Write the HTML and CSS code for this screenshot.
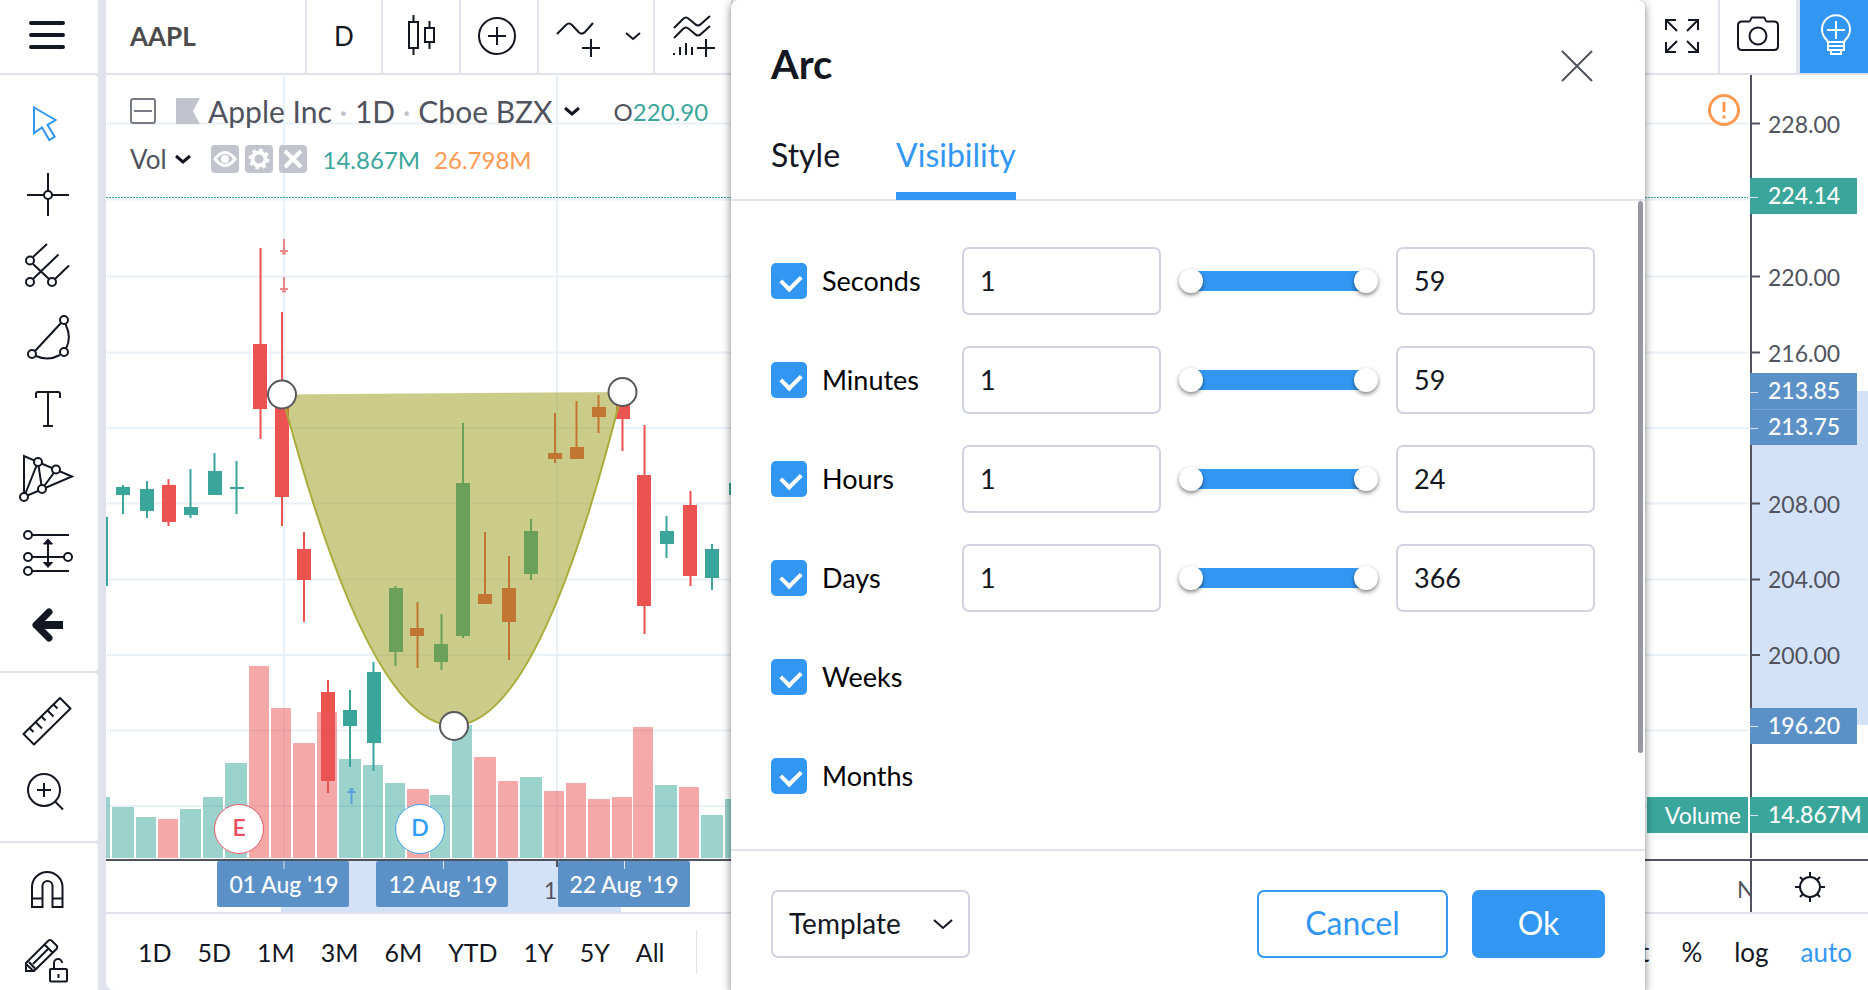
FILE: index.html
```html
<!DOCTYPE html>
<html lang="en">
<head>
    <meta charset="UTF-8">
    <meta name="viewport" content="width=device-width, initial-scale=1.0">
    <title>AAPL chart</title>
    <link rel="stylesheet" href="styles.css">
</head>
<body>

    <div class="layout">

        <nav class="sidebar">
            <div class="menu">
                <button class="tool" aria-label="Menu">
                    <svg class="icon" viewBox="0 0 56 56"><path d="M10 15h32M10 27h32M10 39h32" stroke-width="4" stroke-linecap="round"/></svg>
                </button>
            </div>
            <div class="tools">
                <button class="tool active" aria-label="Cursor">
                    <svg class="icon" viewBox="0 0 56 56"><path d="M13 12.5L34.5 25L26.5 29.8L33.7 41.7L28.3 45L21 32.5L13 38Z"/></svg>
                </button>
                <button class="tool" aria-label="Cross">
                    <svg class="icon" viewBox="0 0 56 56"><path d="M6 28h17M31 28h17M27 6v18M27 32v17"/><circle cx="27" cy="28" r="4"/></svg>
                </button>
                <button class="tool" aria-label="Pitchfork">
                    <svg class="icon" viewBox="0 0 56 56"><path d="M12 18L26 5M12 40L37.500 15.500M12 25L28 40M34 40L48 26.500"/><circle cx="9" cy="21.500" r="4"/><circle cx="9" cy="43" r="4"/><circle cx="31" cy="43" r="4"/></svg>
                </button>
                <button class="tool" aria-label="Shapes">
                    <svg class="icon" viewBox="0 0 56 56"><path d="M14 40L40 12M44.500 13Q51 27 45 37.500M15 45Q27 50.500 39 44"/><circle cx="43" cy="9" r="4"/><circle cx="11" cy="43" r="4"/><circle cx="43" cy="41" r="4"/></svg>
                </button>
                <button class="tool" aria-label="Text">
                    <svg class="icon" viewBox="0 0 56 56"><path d="M15 15V11Q15 9 17 9H37Q39 9 39 11V15M27 9V43M22 43H32"/></svg>
                </button>
                <button class="tool" aria-label="Patterns">
                    <svg class="icon" viewBox="0 0 56 56"><path d="M3 42V1L51 21.500ZM3 42L17 7L21 34L35 15"/><g class="dot"><circle cx="3" cy="42" r="4"/><circle cx="17" cy="7" r="4"/><circle cx="35" cy="14.500" r="4"/><circle cx="21" cy="34" r="4"/></g></svg>
                </button>
                <button class="tool" aria-label="Position">
                    <svg class="icon" viewBox="0 0 56 56"><path d="M11 8H48M11 30H43M11 44H48M27 14V38"/><path class="solid" d="M22.500 17L27 12L31.500 17ZM22.500 35.500L27 40.500L31.500 35.500Z" stroke-width="1"/><circle cx="7" cy="8" r="4"/><circle cx="7" cy="30" r="4"/><circle cx="47" cy="30" r="4"/><circle cx="7" cy="44" r="4"/></svg>
                </button>
                <button class="tool" aria-label="Arrow">
                    <svg class="icon" viewBox="0 0 56 56"><path d="M28 13L15 26L28 39M15 26H30" stroke-width="7" stroke-linecap="round" stroke-linejoin="round"/><path d="M24 26H42" stroke-width="8"/></svg>
                </button>
            </div>
            <div class="tools measure">
                <button class="tool" aria-label="Measure">
                    <svg class="icon" viewBox="0 0 56 56"><path d="M39 5L49.500 15.500L13 51.500L2.500 41Z" stroke-linejoin="round"/><path d="M8.500 35l4 4M14.500 29l6.500 6.500M20.500 23.500l4 4M26.500 17.500l6 6M32.500 11.500l4 4"/></svg>
                </button>
                <button class="tool" aria-label="Zoom in">
                    <svg class="icon" viewBox="0 0 56 56"><circle cx="23" cy="25" r="16"/><path d="M16 25h14M23 18v14M34.500 37l7.500 7.500"/></svg>
                </button>
            </div>
            <div class="tools modes">
                <button class="tool" aria-label="Magnet">
                    <svg class="icon" viewBox="0 0 56 56"><path d="M11 46V25A15.300 15.300 0 0 1 41.500 25V46H31.500V25A5 5 0 0 0 21.500 25V46ZM11 37.500H21.500M31.500 37.500H41.500"/></svg>
                </button>
                <button class="tool" aria-label="Lock drawing">
                    <svg class="icon" viewBox="0 0 56 56"><path d="M5 38V30L27 8Q29 6 31 8L35.500 12.500Q37 14 35.500 16L13 38ZM23.500 11.500L32 20M8 29L14 35.500M12 31L27 16M5 31L12.500 38"/><rect x="29" y="36" width="17" height="12.500" rx="1"/><path d="M33 36V30A4 4 0 0 1 41 30M37.500 41V45"/></svg>
                </button>
            </div>
        </nav>

        <main class="main">

            <header class="topbar">
                <button class="cell symbol">AAPL</button>
                <button class="cell interval">D</button>
                <button class="cell" aria-label="Candles">
                    <svg class="icon" viewBox="0 0 56 56"><path d="M16 14h9v26h-9zM20.500 7v7M20.500 40v7M32 20h9v14h-9zM36.500 13v7M36.500 34v7"/></svg>
                </button>
                <button class="cell" aria-label="Compare">
                    <svg class="icon" viewBox="0 0 56 56"><circle cx="26" cy="28" r="18"/><path d="M17 28h18M26 19v18"/></svg>
                </button>
                <div class="cell indicators">
                    <button class="plain" aria-label="Indicators">
                        <svg class="icon" viewBox="0 0 56 56"><path d="M8 26L17 17Q20 14 23 17L30 24.500Q33 27 36 24L44 15M42 31v18M33 40h18"/></svg>
                    </button>
                    <button class="plain" aria-label="Favorite indicators">
                        <svg class="chevron" viewBox="0 0 20 20"><path d="M3 7l7 6l7-6"/></svg>
                    </button>
                </div>
                <button class="cell" aria-label="Indicator templates">
                    <svg class="icon" viewBox="0 0 56 56"><path d="M9 20L18 11Q21 8 24 11L30 16Q33 19 36 16L45 8M9 30L18 21Q21 18 24 21L30 26Q33 29 36 26L45 18M9 45v2M15 39v8M21 35v12M27 39v8M41 31v18M32 40h18"/></svg>
                </button>
                <span class="spacer"></span>
                <button class="cell" aria-label="Full screen">
                    <svg class="icon" viewBox="0 0 56 56"><path d="M14 22V12H24M14 12L25 23M36 12H46V22M46 12L35 23M14 34V44H24M14 44L25 33M46 34V44H36M46 44L35 33"/></svg>
                </button>
                <button class="cell" aria-label="Snapshot">
                    <svg class="icon" viewBox="0 0 56 56"><path d="M12 13.500H19Q20 13.500 21 11L22 9.500H34L35 11Q36 13.500 37 13.500H44Q48 13.500 48 17.500V38Q48 42 44 42H12Q8 42 8 38V17.500Q8 13.500 12 13.500Z"/><circle cx="28" cy="28" r="8.500"/></svg>
                </button>
                <button class="cell publish" aria-label="Publish idea">
                    <svg class="icon" viewBox="0 0 56 56"><path d="M21 32A14 14 0 1 1 39 32Q38.500 33 38 35V42H22V35Q21.500 33 21 32ZM22 34H38M22 38H38M25 42V46H35V42M21 22h18M30 13v18"/></svg>
                </button>
            </header>

            <section class="chart">
                <div class="plot-row">
                    <div class="plot">
                        <svg class="canvas">
                            <!-- all coordinates below are window coordinates -->
                            <g transform="translate(-106 -75)">
                                <g class="grid">
                                    <path d="M107 123.500H2400M107 199.500H2400M107 276.500H2400M107 352.500H2400M107 428H2400M107 503.500H2400M107 579.500H2400M107 655H2400M107 730.500H2400M107 806H2400"/>
                                    <path d="M284 76V858M557 76V858"/>
                                </g>
                                <path class="last-price" d="M106 197.500H2400"/>

                                <g class="volume up">
                                    <rect x="106" y="797" width="4" height="61"/>
                                    <rect x="112" y="807" width="22" height="51"/>
                                    <rect x="136" y="817" width="20" height="41"/>
                                    <rect x="180" y="809" width="21" height="49"/>
                                    <rect x="203" y="797" width="20" height="61"/>
                                    <rect x="225" y="763" width="22" height="95"/>
                                    <rect x="339" y="759" width="22" height="99"/>
                                    <rect x="363" y="765" width="20" height="93"/>
                                    <rect x="385" y="783" width="20" height="75"/>
                                    <rect x="430" y="795" width="20" height="63"/>
                                    <rect x="452" y="725" width="20" height="133"/>
                                    <rect x="520" y="777" width="22" height="81"/>
                                    <rect x="655" y="785" width="22" height="73"/>
                                    <rect x="701" y="815" width="22" height="43"/>
                                    <rect x="725" y="799" width="20" height="59"/>
                                </g>
                                <g class="volume down">
                                    <rect x="158" y="819" width="20" height="39"/>
                                    <rect x="249" y="666" width="20" height="192"/>
                                    <rect x="271" y="708" width="20" height="150"/>
                                    <rect x="293" y="743" width="22" height="115"/>
                                    <rect x="317" y="712" width="20" height="146"/>
                                    <rect x="407" y="789" width="22" height="69"/>
                                    <rect x="474" y="757" width="22" height="101"/>
                                    <rect x="498" y="781" width="20" height="77"/>
                                    <rect x="544" y="791" width="20" height="67"/>
                                    <rect x="566" y="783" width="20" height="75"/>
                                    <rect x="588" y="799" width="22" height="59"/>
                                    <rect x="612" y="797" width="20" height="61"/>
                                    <rect x="633" y="727" width="20" height="131"/>
                                    <rect x="679" y="787" width="20" height="71"/>
                                </g>

                                <g class="wick up">
                                    <path d="M123 485V514M147 481V518M190.500 469V518M214.500 453V495M236.500 461V514M350 690V767M373.500 662V771M395.500 586V666M441.500 614V670M463 423V638M531 519V580M666.500 516V558M712 544V590"/>
                                </g>
                                <g class="wick down">
                                    <path d="M168.500 479V526M260.500 248V439M282 312V526M304 532V622M328 680V793M417.500 602V668M485 532V604M509 556V660M555 413V463M576.500 401V459M598.500 395V433M622.500 395V451M644.500 425V634M690.500 491V586"/>
                                </g>
                                <g class="candle up">
                                    <rect x="106" y="517" width="2" height="69"/>
                                    <rect x="116" y="487" width="14" height="8"/>
                                    <rect x="140" y="489" width="14" height="22"/>
                                    <rect x="184" y="507" width="14" height="8"/>
                                    <rect x="208" y="471" width="14" height="24"/>
                                    <rect x="230" y="487" width="14" height="2"/>
                                    <rect x="343" y="710" width="14" height="16"/>
                                    <rect x="367" y="672" width="14" height="71"/>
                                    <rect x="389" y="588" width="14" height="64"/>
                                    <rect x="434" y="644" width="14" height="18"/>
                                    <rect x="456" y="483" width="14" height="153"/>
                                    <rect x="524" y="531" width="14" height="43"/>
                                    <rect x="660" y="531" width="14" height="13"/>
                                    <rect x="705" y="549" width="14" height="29"/>
                                    <rect x="729" y="483" width="14" height="12"/>
                                </g>
                                <g class="candle down">
                                    <rect x="162" y="485" width="14" height="37"/>
                                    <rect x="253" y="344" width="14" height="65"/>
                                    <rect x="275" y="396" width="14" height="101"/>
                                    <rect x="297" y="549" width="14" height="31"/>
                                    <rect x="321" y="692" width="14" height="89"/>
                                    <rect x="410" y="628" width="14" height="8"/>
                                    <rect x="478" y="594" width="14" height="10"/>
                                    <rect x="502" y="588" width="14" height="34"/>
                                    <rect x="548" y="453" width="14" height="6"/>
                                    <rect x="570" y="447" width="14" height="12"/>
                                    <rect x="592" y="407" width="14" height="10"/>
                                    <rect x="616" y="398" width="14" height="21"/>
                                    <rect x="637" y="475" width="14" height="131"/>
                                    <rect x="683" y="505" width="14" height="71"/>
                                </g>

                                <g class="mark down">
                                    <path d="M284 239V254M280 251H288M282 253.500H286M284 277V292M280 289H288M282 291.500H286"/>
                                </g>
                                <g class="mark up">
                                    <path d="M351.500 804V788M347.500 792H355.500M349.500 789.500H353.500"/>
                                </g>

                                <!-- arc drawing -->
                                <path class="arc-fill" d="M282 394.500Q456 1058 622 392Z"/>
                                <path class="arc-line" d="M282 394.500Q456 1058 622 392"/>
                                <g class="handle">
                                    <circle cx="282" cy="394.500" r="14"/>
                                    <circle cx="622.500" cy="392" r="14"/>
                                    <circle cx="454" cy="726" r="14"/>
                                </g>

                                <g class="event earnings">
                                    <circle cx="239" cy="829" r="24.500"/>
                                    <text x="239" y="836">E</text>
                                </g>
                                <g class="event dividends">
                                    <circle cx="420" cy="829" r="24.500"/>
                                    <text x="420" y="836">D</text>
                                </g>
                            </g>
                        </svg>

                        <div class="legend">
                            <div class="legend-row title-row">
                                <svg class="collapse" viewBox="0 0 26 26"><rect x="1" y="1" width="24" height="24" rx="2"/><path d="M4 13h18"/></svg>
                                <svg class="flag" viewBox="0 0 24 26"><path d="M0 0H24L17 13L24 26H0Z"/></svg>
                                <span class="name">Apple Inc <i>·</i> 1D <i>·</i> Cboe BZX</span>
                                <svg class="chevron bold" viewBox="0 0 20 20"><path d="M3 7l7 6l7-6"/></svg>
                                <span class="ohlc">O<b>220.90</b></span>
                            </div>
                            <div class="legend-row">
                                <span class="study">Vol</span>
                                <svg class="chevron bold" viewBox="0 0 20 20"><path d="M3 7l7 6l7-6"/></svg>
                                <div class="study-actions">
                                    <button aria-label="Hide"><svg viewBox="0 0 28 28"><path d="M4 14Q14 1 24 14Q14 27 4 14Z"/><circle cx="14" cy="14" r="2" stroke-width="4"/></svg></button>
                                    <button aria-label="Settings"><svg viewBox="0 0 28 28"><circle cx="14" cy="14" r="6.500" stroke-width="4"/><circle cx="14" cy="14" r="9" stroke-width="3" stroke-dasharray="3.500 3.570"/></svg></button>
                                    <button aria-label="Remove"><svg viewBox="0 0 28 28"><path d="M6 6L22 22M22 6L6 22" stroke-width="4"/></svg></button>
                                </div>
                                <span class="value-up">14.867M</span>
                                <span class="value-ma">26.798M</span>
                            </div>
                        </div>

                        <svg class="warning" viewBox="0 0 32 32"><circle cx="16" cy="16" r="14.500"/><path d="M16 8V18M16 21.500V24.500"/></svg>
                        <span class="volume-tag">Volume</span>
                    </div>

                    <svg class="price-axis">
                        <g transform="translate(-1750 -75)">
                            <rect class="range-fill" x="1752" y="391" width="116" height="334"/>
                            <path class="axis-line" d="M1751 75V858M1752 123.500H1760M1752 276.500H1760M1752 352.500H1760M1752 503.500H1760M1752 579.500H1760M1752 655H1760"/>
                            <text x="1768" y="133">228.00</text>
                            <text x="1768" y="286">220.00</text>
                            <text x="1768" y="362">216.00</text>
                            <text x="1768" y="513">208.00</text>
                            <text x="1768" y="588">204.00</text>
                            <text x="1768" y="664">200.00</text>
                            <rect class="tag-teal" x="1750" y="178" width="107" height="36"/>
                            <rect class="tag-blue" x="1750" y="373" width="107" height="36"/>
                            <rect class="tag-blue" x="1750" y="409" width="107" height="36"/>
                            <rect class="tag-blue" x="1750" y="708" width="107" height="36"/>
                            <rect class="tag-teal" x="1750" y="797" width="118" height="36"/>
                            <path class="tag-split" d="M1752 409.500H1857"/>
                            <path class="tag-tick" d="M1750 197.500H1758M1750 392.500H1758M1750 428.500H1758M1750 726.500H1758M1750 815.500H1758"/>
                            <g class="tag-text">
                                <text x="1768" y="204">224.14</text>
                                <text x="1768" y="399">213.85</text>
                                <text x="1768" y="435">213.75</text>
                                <text x="1768" y="734">196.20</text>
                                <text x="1768" y="823">14.867M</text>
                            </g>
                        </g>
                    </svg>
                </div>

                <div class="time-row">
                    <svg class="time-axis">
                        <g transform="translate(-106 -861)">
                            <rect class="range-fill" x="281" y="861" width="340" height="51"/>
                            <path class="axis-line" d="M557 861V867"/>
                            <text x="557" y="899">19</text>
                            <rect class="tag-blue" x="217" y="861" width="132" height="46" rx="2"/>
                            <rect class="tag-blue" x="376" y="861" width="132" height="46" rx="2"/>
                            <rect class="tag-blue" x="558" y="861" width="132" height="46" rx="2"/>
                            <path class="tag-tick" d="M284 861V869M443.500 861V869M624.500 861V869"/>
                            <g class="tag-text">
                                <text x="284" y="893">01 Aug '19</text>
                                <text x="443" y="893">12 Aug '19</text>
                                <text x="624" y="893">22 Aug '19</text>
                            </g>
                        </g>
                    </svg>
                    <span class="next-month">N</span>
                    <button class="axis-settings" aria-label="Chart settings">
                        <svg viewBox="0 0 32 32"><circle cx="16" cy="16" r="10"/><path d="M16 6V1M16 26V31M6 16H1M26 16H31M9 9L6 6M23 9L26 6M9 23L6 26M23 23L26 26"/></svg>
                    </button>
                </div>
            </section>

            <footer class="bottombar">
                <div class="ranges">
                    <button>1D</button>
                    <button>5D</button>
                    <button>1M</button>
                    <button>3M</button>
                    <button>6M</button>
                    <button>YTD</button>
                    <button>1Y</button>
                    <button>5Y</button>
                    <button>All</button>
                </div>
                <div class="scales">
                    <button>ext</button>
                    <button>%</button>
                    <button>log</button>
                    <button class="on">auto</button>
                </div>
            </footer>
        </main>
    </div>

    <div class="dialog" role="dialog" aria-labelledby="dialogTitle">
        <div class="dialog-head">
            <h1 id="dialogTitle">Arc</h1>
            <button class="close" aria-label="Close">
                <svg viewBox="0 0 32 32"><path d="M1 1L31 31M31 1L1 31"/></svg>
            </button>
        </div>
        <div class="tabs">
            <button class="tab">Style</button>
            <button class="tab selected">Visibility</button>
        </div>

        <div class="dialog-body">
            <div class="row">
                <label class="check"><input type="checkbox" checked><span>Seconds</span></label>
                <input class="field" type="text" value="1" aria-label="Seconds from">
                <div class="range">
                    <input type="range" min="1" max="59" value="1" aria-label="Seconds minimum">
                    <input type="range" min="1" max="59" value="59" aria-label="Seconds maximum">
                </div>
                <input class="field" type="text" value="59" aria-label="Seconds to">
            </div>
            <div class="row">
                <label class="check"><input type="checkbox" checked><span>Minutes</span></label>
                <input class="field" type="text" value="1" aria-label="Minutes from">
                <div class="range">
                    <input type="range" min="1" max="59" value="1" aria-label="Minutes minimum">
                    <input type="range" min="1" max="59" value="59" aria-label="Minutes maximum">
                </div>
                <input class="field" type="text" value="59" aria-label="Minutes to">
            </div>
            <div class="row">
                <label class="check"><input type="checkbox" checked><span>Hours</span></label>
                <input class="field" type="text" value="1" aria-label="Hours from">
                <div class="range">
                    <input type="range" min="1" max="24" value="1" aria-label="Hours minimum">
                    <input type="range" min="1" max="24" value="24" aria-label="Hours maximum">
                </div>
                <input class="field" type="text" value="24" aria-label="Hours to">
            </div>
            <div class="row">
                <label class="check"><input type="checkbox" checked><span>Days</span></label>
                <input class="field" type="text" value="1" aria-label="Days from">
                <div class="range">
                    <input type="range" min="1" max="366" value="1" aria-label="Days minimum">
                    <input type="range" min="1" max="366" value="366" aria-label="Days maximum">
                </div>
                <input class="field" type="text" value="366" aria-label="Days to">
            </div>
            <div class="row">
                <label class="check"><input type="checkbox" checked><span>Weeks</span></label>
            </div>
            <div class="row">
                <label class="check"><input type="checkbox" checked><span>Months</span></label>
            </div>
            <div class="scrollbar"></div>
        </div>

        <div class="dialog-foot">
            <div class="template">
                <select aria-label="Template">
                    <option>Template</option>
                </select>
                <svg class="chevron" viewBox="0 0 20 20"><path d="M1 6l9 8l9-8"/></svg>
            </div>
            <button class="btn cancel">Cancel</button>
            <button class="btn ok">Ok</button>
        </div>
    </div>

</body>
</html>
```

FILE: styles.css
```css
* {
    box-sizing: border-box;
}

body {
    margin: 0;
    height: 100vh;
    overflow: hidden;
    background: #e0e3eb;
    color: #131722;
    font-family: Lato, "Noto Sans", sans-serif;
    font-size: 26px;
}

button, input, select {
    font: inherit;
    color: inherit;
}

button {
    margin: 0;
    padding: 0;
    border: none;
    background: none;
    cursor: pointer;
}

svg {
    display: block;
    flex: none;
    fill: none;
    stroke: #131722;
    stroke-width: 2;
}

svg text {
    stroke: none;
}

.layout {
    display: flex;
    gap: 8px;
    height: 100vh;
}

.icon {
    width: 56px;
    height: 56px;
    overflow: visible;
}

.chevron {
    width: 20px;
    height: 20px;
}

.chevron.bold {
    stroke-width: 3;
}

/* left toolbar */
.sidebar {
    display: flex;
    flex-direction: column;
    gap: 2px;
    width: 98px;
    flex: none;
    overflow: hidden;
}

.menu {
    height: 73px;
    flex: none;
    background: #fff;
}

.tools {
    flex: none;
    padding: 12px 0 8px;
    background: #fff;
    border-radius: 0 4px 4px 0;
}

.measure {
    padding: 12px 0;
}

.modes {
    padding: 10px 0;
}

.tool {
    display: flex;
    align-items: center;
    justify-content: center;
    width: 100%;
    height: 72px;
}

.tool.active svg {
    stroke: #3297f3;
}

.dot {
    fill: #fff;
}

.solid {
    fill: #131722;
}

/* main column */
.main {
    display: flex;
    flex-direction: column;
    flex: 1;
    min-width: 0;
    background: #fff;
    border-radius: 0 0 0 8px;
}

.topbar {
    display: flex;
    height: 75px;
    flex: none;
    border-bottom: 2px solid #e0e3eb;
}

.cell {
    display: flex;
    align-items: center;
    justify-content: center;
    width: 78px;
    padding-bottom: 2px;
    border-right: 2px solid #e0e3eb;
}

.symbol {
    width: 201px;
    padding-left: 24px;
    justify-content: flex-start;
    font-weight: bold;
    color: #4a4a4a;
}

.interval {
    width: 76px;
}

.indicators {
    width: 116px;
    gap: 18px;
}

.spacer {
    flex: 1;
}

.publish {
    width: 70px;
    border-right: none;
    border-left: 2px solid #e0e3eb;
    background: #3297f3;
}

.publish svg {
    stroke: #fff;
}

/* chart */
.chart {
    display: flex;
    flex-direction: column;
    flex: 1;
    min-height: 0;
}

.plot-row {
    display: flex;
    flex: 1;
    min-height: 0;
    border-bottom: 2px solid #50535e;
}

.plot {
    position: relative;
    flex: 1;
    min-width: 0;
    margin-right: 2px;
    overflow: hidden;
}

.canvas {
    width: 100%;
    height: 100%;
}

.grid {
    stroke: #e9f0f6;
}

.last-price {
    stroke: #3aa69b;
    stroke-width: 1;
    stroke-dasharray: 2 1;
}

.volume {
    stroke: none;
    opacity: 0.5;
}

.volume.up, .candle.up {
    fill: #3aa69b;
}

.volume.down {
    fill: #eb5454;
}

.candle {
    stroke: none;
}

.candle.down {
    fill: #eb5350;
}

.wick.up {
    stroke: #3aa69b;
}

.wick.down {
    stroke: #eb5350;
}

.mark {
    opacity: 0.7;
}

.mark.up {
    stroke: #3f8ae0;
}

.mark.down {
    stroke: #e65a5a;
}

.arc-fill {
    fill: #999915;
    stroke: none;
    opacity: 0.5;
}

.arc-line {
    stroke: #a9ab3a;
}

.handle {
    fill: #fff;
    stroke: #58585a;
}

.event {
    fill: #fff;
    stroke-width: 1;
    font-size: 23px;
    font-weight: 600;
    text-anchor: middle;
}

.earnings {
    stroke: #e65a64;
}

.earnings text {
    fill: #eb4d5c;
}

.dividends {
    stroke: #3fa3f3;
}

.dividends text {
    fill: #2d9cf8;
}

.legend {
    position: absolute;
    top: 12px;
    left: 24px;
    color: #50535e;
}

.legend-row {
    display: flex;
    align-items: center;
    height: 48px;
    white-space: nowrap;
}

.collapse {
    width: 26px;
    height: 26px;
    stroke: #787b86;
}

.flag {
    width: 24px;
    height: 26px;
    margin: 0 8px 0 20px;
    fill: #c1c4cd;
    stroke: none;
}

.name {
    font-size: 30px;
}

.name i {
    color: #c1c4cd;
    font-style: normal;
}

.title-row .chevron {
    margin: 0 32px 0 9px;
}

.ohlc, .value-up, .value-ma {
    font-size: 24px;
}

.ohlc b {
    font-weight: normal;
    color: #3aa69b;
}

.study {
    margin-right: 6px;
}

.study-actions {
    display: flex;
    gap: 6px;
    margin: 0 16px 0 18px;
}

.study-actions button {
    width: 28px;
    height: 28px;
    border-radius: 4px;
    background: #c1c4cd;
}

.study-actions svg {
    stroke: #fff;
    stroke-width: 3;
}

.value-up {
    margin-right: 14px;
    color: #3aa69b;
}

.value-ma {
    color: #ff9850;
}

.warning {
    position: absolute;
    top: 19px;
    right: 8px;
    width: 32px;
    height: 32px;
    stroke: #ff9850;
    stroke-width: 3;
}

.volume-tag {
    position: absolute;
    right: 0;
    bottom: 26px;
    width: 101px;
    height: 36px;
    padding-right: 7px;
    background: #3aa69b;
    color: #fff;
    font-size: 23px;
    line-height: 36px;
    text-align: right;
}

.price-axis {
    width: 118px;
    height: 100%;
}

.price-axis text, .time-axis text {
    fill: #50535e;
    font-size: 23px;
}

.time-axis text {
    text-anchor: middle;
}

.axis-line {
    stroke: #50535e;
}

.range-fill {
    fill: #d4e2f8;
    stroke: none;
}

.tag-teal {
    fill: #3aa69b;
    stroke: none;
}

.tag-blue {
    fill: #5b91c7;
    stroke: none;
}

.tag-split {
    stroke: #74a2d0;
    stroke-width: 1;
}

.tag-tick {
    stroke: #d9e6f2;
    stroke-width: 1;
}

.price-axis .tag-text text, .time-axis .tag-text text {
    fill: #fff;
    font-weight: 500;
}

.time-row {
    display: flex;
    align-items: center;
    height: 53px;
    flex: none;
    border-bottom: 2px solid #e0e3eb;
}

.time-axis {
    flex: 1;
    min-width: 0;
    height: 51px;
}

.next-month {
    width: 13px;
    padding-top: 4px;
    overflow: hidden;
    color: #50535e;
    font-size: 23px;
}

.axis-settings {
    display: flex;
    align-items: center;
    justify-content: center;
    width: 118px;
    height: 51px;
    border-left: 2px solid #50535e;
}

.axis-settings svg {
    width: 32px;
    height: 32px;
}

/* bottom bar */
.bottombar {
    display: flex;
    align-items: center;
    justify-content: space-between;
    height: 76px;
    flex: none;
    padding: 0 16px 0 32px;
}

.ranges {
    display: flex;
    gap: 26px;
    padding-right: 32px;
    border-right: 1px solid #e0e3eb;
    font-size: 25px;
    line-height: 44px;
}

.scales {
    display: flex;
    gap: 32px;
}

.scales .on {
    color: #3297f3;
}

/* dialog */
.dialog {
    position: absolute;
    top: 0;
    right: 223px;
    bottom: 0;
    display: flex;
    flex-direction: column;
    width: 914px;
    background: #fff;
    border-radius: 8px 8px 0 0;
    box-shadow: 0 2px 8px rgba(0, 0, 0, 0.5);
}

.dialog-head {
    display: flex;
    align-items: center;
    justify-content: space-between;
    height: 132px;
    padding: 0 52px 0 40px;
}

.dialog-head h1 {
    margin: 0;
    padding-bottom: 4px;
    font-size: 40px;
}

.close svg {
    width: 32px;
    height: 32px;
    stroke: #50535e;
}

.tabs {
    display: flex;
    gap: 56px;
    height: 69px;
    padding: 0 40px;
    border-bottom: 2px solid #e0e3eb;
}

.tab {
    height: 68px;
    padding-bottom: 16px;
    border-bottom: 8px solid transparent;
    font-size: 32px;
}

.tab.selected {
    color: #3297f3;
    border-bottom-color: #3297f3;
}

.dialog-body {
    position: relative;
    display: flex;
    flex-direction: column;
    gap: 31px;
    flex: 1;
    min-height: 0;
    padding: 46px 40px 0;
    overflow: hidden;
}

.row {
    display: grid;
    grid-template-columns: 173px 199px 199px 199px;
    gap: 18px;
    align-items: center;
    height: 68px;
    flex: none;
    color: #000;
}

.check {
    display: flex;
    align-items: center;
    gap: 15px;
}

.check input {
    position: relative;
    appearance: none;
    width: 36px;
    height: 36px;
    margin: 0;
    border-radius: 5px;
    background: #3297f3;
}

.check input:checked::after {
    content: "";
    position: absolute;
    top: 8px;
    left: 13px;
    width: 10px;
    height: 15px;
    border: solid #fff;
    border-width: 0 4px 4px 0;
    transform: rotate(45deg);
}

.check span {
    padding-bottom: 2px;
    font-size: 27px;
}

.field {
    width: 100%;
    height: 68px;
    padding: 0 16px 2px;
    border: 2px solid #d1d4e0;
    border-radius: 7px;
    background: #fff;
    color: #131722;
    font-size: 27px;
}

.range {
    position: relative;
    height: 20px;
    padding: 0 12px;
    background: #3297f3 content-box;
}

.range input {
    position: absolute;
    top: -2px;
    left: 0;
    width: 100%;
    height: 24px;
    margin: 0;
    appearance: none;
    background: none;
    pointer-events: none;
}

.range input::-webkit-slider-thumb {
    appearance: none;
    width: 24px;
    height: 24px;
    border-radius: 50%;
    background: #fff;
    box-shadow: 0 2px 4px rgba(0, 0, 0, 0.5);
    pointer-events: auto;
}

.scrollbar {
    position: absolute;
    top: 0;
    right: 2px;
    width: 5px;
    height: 552px;
    border-radius: 3px;
    background: #9598a1;
}

.dialog-foot {
    display: flex;
    align-items: center;
    gap: 24px;
    height: 141px;
    padding: 6px 40px 0;
    border-top: 2px solid #e0e3eb;
}

.template {
    position: relative;
    margin-right: auto;
}

.template select {
    width: 199px;
    height: 68px;
    padding: 0 16px 2px;
    border: 2px solid #d1d4e0;
    border-radius: 7px;
    background: #fff;
    appearance: none;
    font-size: 28px;
}

.template .chevron {
    position: absolute;
    top: 24px;
    right: 17px;
    pointer-events: none;
}

.btn {
    height: 68px;
    padding-bottom: 2px;
    border: 2px solid #3297f3;
    border-radius: 7px;
    font-size: 32px;
}

.cancel {
    width: 191px;
    color: #3297f3;
}

.ok {
    width: 133px;
    background: #3297f3;
    color: #fff;
}
```
